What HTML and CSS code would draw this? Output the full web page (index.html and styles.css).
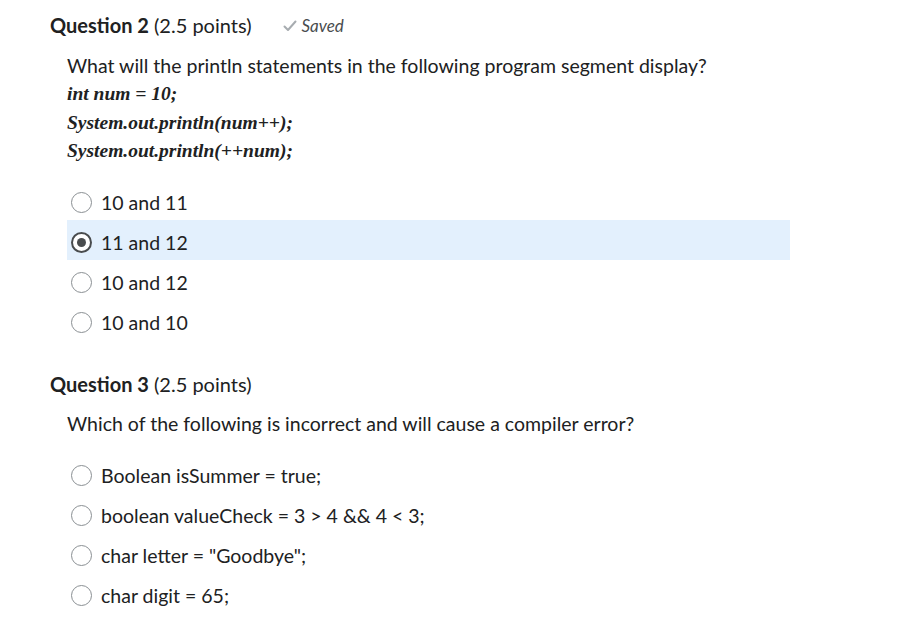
FILE: index.html
```html
<!DOCTYPE html>
<html>
<head>
<meta charset="utf-8">
<link rel="stylesheet" href="styles.css">
</head>
<body>
<div class="page">
  <section class="question q2">
    <div class="q-head">
      <h2 class="q-title"><strong>Question 2</strong> (2.5 points)</h2>
      <span class="saved">
        <svg class="check" width="14" height="12" viewBox="0 0 14 12"><path d="M1.5 6.5 L5 10 L12.5 1.5" fill="none" stroke="#a7acb0" stroke-width="2" stroke-linecap="round" stroke-linejoin="round"/></svg>
        <em>Saved</em>
      </span>
    </div>
    <div class="q-body">
      <p class="prompt">What will the println statements in the following program segment display?</p>
      <p class="code">int num = 10;</p>
      <p class="code">System.out.println(num++);</p>
      <p class="code">System.out.println(++num);</p>
    </div>
    <ul class="options">
      <li class="opt"><span class="radio"></span><span class="label">10 and 11</span></li>
      <li class="opt selected"><span class="radio on"></span><span class="label">11 and 12</span></li>
      <li class="opt"><span class="radio"></span><span class="label">10 and 12</span></li>
      <li class="opt"><span class="radio"></span><span class="label">10 and 10</span></li>
    </ul>
  </section>
  <section class="question q3">
    <div class="q-head">
      <h2 class="q-title"><strong>Question 3</strong> (2.5 points)</h2>
    </div>
    <div class="q-body">
      <p class="prompt">Which of the following is incorrect and will cause a compiler error?</p>
    </div>
    <ul class="options">
      <li class="opt"><span class="radio"></span><span class="label">Boolean isSummer = true;</span></li>
      <li class="opt"><span class="radio"></span><span class="label">boolean valueCheck = 3 &gt; 4 &amp;&amp; 4 &lt; 3;</span></li>
      <li class="opt"><span class="radio"></span><span class="label">char letter = "Goodbye";</span></li>
      <li class="opt"><span class="radio"></span><span class="label">char digit = 65;</span></li>
    </ul>
  </section>
</div>
</body>
</html>
```
FILE: styles.css
```css
* { box-sizing: border-box; }
html, body { margin: 0; padding: 0; background: #ffffff; }
body {
  font-family: Lato, "Noto Sans", sans-serif;
  color: #202122;
  font-size: 19.5px;
}
.page {
  padding: 12px 0 0 50px;
  width: 922px;
}
.q-head {
  display: flex;
  align-items: center;
  gap: 31px;
  height: 27px;
}
.q-title {
  margin: 0;
  font-size: 20px;
  font-weight: 400;
  line-height: 27px;
}
.q-title strong { font-weight: 700; }
.saved {
  display: flex;
  align-items: center;
  gap: 5px;
  color: #494c4e;
  font-size: 17px;
}
.saved em { font-style: italic; }
.q-body {
  padding-left: 17px;
  margin-top: 13px;
}
.prompt {
  margin: 0;
  line-height: 28px;
}
.code {
  margin: 0;
  font-family: "Liberation Serif", "Times New Roman", serif;
  font-weight: 700;
  font-style: italic;
  font-size: 19.5px;
  line-height: 28.5px;
}
.q2 .code:first-of-type { margin-top: 1px; }
.options {
  list-style: none;
  margin: 0;
  padding: 0 0 0 17px;
  width: 740px;
}
.q2 .options { margin-top: 14px; }
.opt {
  display: flex;
  align-items: center;
  height: 40px;
  padding-left: 4px;
  padding-top: 7px;
}
.opt.selected { background: #e3f0fd; }
.radio {
  width: 21px;
  height: 21px;
  border-radius: 50%;
  border: 1px solid #8a8f93;
  background: #fff;
  margin-right: 9px;
  flex: none;
  display: flex;
  align-items: center;
  justify-content: center;
  margin-top: -2px;
}
.radio.on { border: 2px solid #494c4e; }
.radio.on::after {
  content: "";
  width: 9px;
  height: 9px;
  border-radius: 50%;
  background: #494c4e;
}
.label { line-height: 22px; }
.q3 { margin-top: 31px; }
.q3 .q-body { margin-top: 12px; }
.q3 .options { margin-top: 15px; }
```
